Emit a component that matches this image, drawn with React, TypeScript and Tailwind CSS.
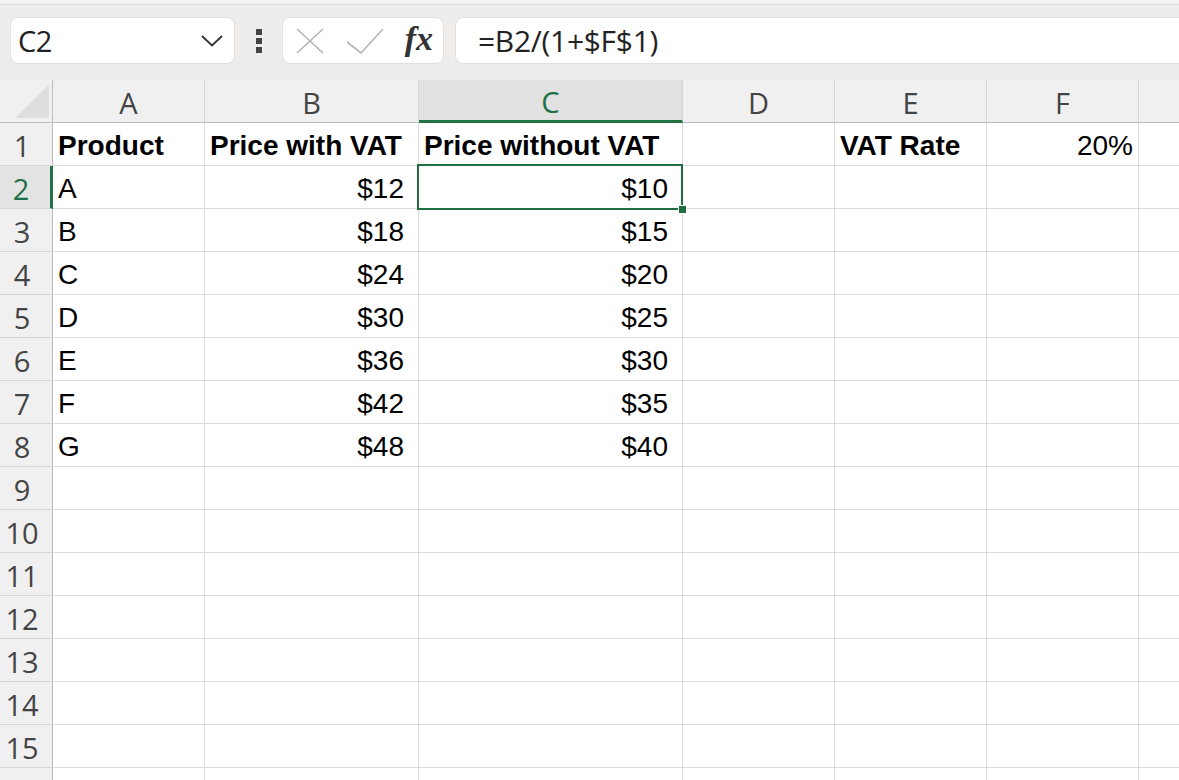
import React from 'react';

// Sheet layout: widths include each cell's 1px right border
const COLS = ['A', 'B', 'C', 'D', 'E', 'F', 'G'];
const GRID = 'grid shrink-0 grid-cols-[53px_152px_214px_264px_152px_152px_152px_152px]';

type Cell = { v?: string; bold?: boolean; align?: 'left' | 'right'; pr?: 'cur' | 'pct' };

const DATA: Record<number, Record<string, Cell>> = {
    1: {
        A: { v: 'Product', bold: true },
        B: { v: 'Price with VAT', bold: true },
        C: { v: 'Price without VAT', bold: true },
        E: { v: 'VAT Rate', bold: true },
        F: { v: '20%', align: 'right', pr: 'pct' },
    },
};

const PRODUCTS = [
    ['A', '$12', '$10'],
    ['B', '$18', '$15'],
    ['C', '$24', '$20'],
    ['D', '$30', '$25'],
    ['E', '$36', '$30'],
    ['F', '$42', '$35'],
    ['G', '$48', '$40'],
];

PRODUCTS.forEach(([p, withVat, withoutVat], i) => {
    DATA[i + 2] = {
        A: { v: p },
        B: { v: withVat, align: 'right', pr: 'cur' },
        C: { v: withoutVat, align: 'right', pr: 'cur' },
    };
});

const Chevron = () => (
    <svg width="24" height="14" viewBox="0 0 24 14" className="block">
        <polyline points="2,2 12,11.5 22,2" fill="none" stroke="#333" strokeWidth="1.8" />
    </svg>
);

const CrossIcon = () => (
    <svg width="28" height="26" viewBox="0 0 28 26" className="block">
        <line x1="1" y1="1" x2="27" y2="25" stroke="#b4b4b4" strokeWidth="1.6" />
        <line x1="27" y1="1" x2="1" y2="25" stroke="#b4b4b4" strokeWidth="1.6" />
    </svg>
);

const CheckIcon = () => (
    <svg width="38" height="28" viewBox="0 0 38 28" className="block">
        <polyline points="1,15 15,26 37,2" fill="none" stroke="#b4b4b4" strokeWidth="1.6" />
    </svg>
);

const DataCell = ({ row, col }: { row: number; col: string }) => {
    const cell = DATA[row]?.[col] || {};
    const selected = row === 2 && col === 'C';
    return (
        <div
            className={`relative h-[43px] border-r border-b border-[#dcdcdc] bg-white flex items-end pb-[3px] overflow-visible whitespace-nowrap
                ${cell.align === 'right' ? 'justify-end' : 'justify-start pl-[5px]'}
                ${cell.pr === 'cur' ? 'pr-[14px]' : ''} ${cell.pr === 'pct' ? 'pr-[5px]' : ''}`}
        >
            {cell.v && (
                <span className={`leading-[32px] text-[28px] text-black ${cell.bold ? 'font-bold' : ''}`}>
                    {cell.v}
                </span>
            )}
            {selected && (
                <div className="absolute -left-[2px] -top-[2px] -right-[1px] -bottom-[2px] border-2 border-[#1f6e43] z-10 pointer-events-none">
                    <div className="absolute -right-[6px] -bottom-[6px] w-[9px] h-[9px] bg-[#1f6e43] border border-white" />
                </div>
            )}
        </div>
    );
};

export default function App() {
    const rows = Array.from({ length: 15 }, (_, i) => i + 1);

    return (
        <div className="w-[1179px] h-[780px] overflow-hidden bg-white flex flex-col" style={{ fontFamily: '"Liberation Sans", Arial, sans-serif' }}>
            {/* Ribbon edge */}
            <div className="h-[5px] shrink-0 bg-[#f5f3f1] border-b border-[#dedad7] shadow-[0_1px_3px_rgba(0,0,0,0.12)]" />

            {/* Formula bar */}
            <div className="h-[75px] shrink-0 bg-[#efedeb] flex items-start pt-[12px] pl-[10px]" style={{ fontFamily: '"Open Sans", "Noto Sans", sans-serif' }}>
                <div className="w-[225px] h-[47px] shrink-0 bg-white rounded-lg border border-[#e2dfdc] flex items-center justify-between pl-[7px] pr-[10px]">
                    <span className="text-[29px] leading-none text-[#222] tracking-[-0.5px]">C2</span>
                    <Chevron />
                </div>
                <div className="w-[47px] h-[47px] shrink-0 flex flex-col items-center justify-center gap-[3px]">
                    <div className="w-[6px] h-[6px] bg-[#444]" />
                    <div className="w-[6px] h-[6px] bg-[#444]" />
                    <div className="w-[6px] h-[6px] bg-[#444]" />
                </div>
                <div className="w-[162px] h-[47px] shrink-0 bg-white rounded-lg border border-[#e2dfdc] flex items-center pl-[13px] pr-[10px]">
                    <CrossIcon />
                    <div className="ml-[22px]">
                        <CheckIcon />
                    </div>
                    <span
                        className="ml-auto text-[34px] leading-none italic font-bold text-[#333] -mt-[4px]"
                        style={{ fontFamily: '"Liberation Serif", "DejaVu Serif", serif' }}
                    >
                        fx
                    </span>
                </div>
                <div className="ml-[11px] flex-1 h-[47px] bg-white rounded-l-lg border border-r-0 border-[#e2dfdc] flex items-center pl-[22px]">
                    <span className="text-[30px] leading-none text-[#222] tracking-[-0.3px]">=B2/(1+$F$1)</span>
                </div>
            </div>

            {/* Column headers */}
            <div className={GRID} style={{ fontFamily: '"Open Sans", "Noto Sans", sans-serif' }}>
                <div className="relative h-[43px] bg-[#f0f0f0] border-r border-b border-[#bdbdbd]">
                    <svg width="53" height="42" viewBox="0 0 53 42" className="absolute inset-0">
                        <polygon points="49,5 49,38 15,38" fill="#dedede" />
                    </svg>
                </div>
                {COLS.map((c) => (
                    <div
                        key={c}
                        className={`h-[43px] border-r border-[#d6d6d6] flex items-center justify-center pt-[2px] text-[29px] leading-none
                            ${c === 'C'
                                ? 'bg-[#e1e1e1] text-[#1e7145] border-b-[3px] border-b-[#217346]'
                                : 'bg-[#f0f0f0] text-[#444] border-b border-b-[#bdbdbd]'}`}
                    >
                        {/* G sits past the window edge, its label is not visible */}
                        {c === 'G' ? '' : c}
                    </div>
                ))}
            </div>

            {/* Rows */}
            {rows.map((r) => (
                <div key={r} className={GRID}>
                    <div
                        className={`h-[43px] border-b border-[#d6d6d6] flex items-center justify-center pr-[8px] pt-[2px] text-[29px] leading-none
                            ${r === 2
                                ? 'bg-[#e3e3e3] text-[#1e7145] border-r-[3px] border-r-[#217346]'
                                : 'bg-[#f0f0f0] text-[#444] border-r border-r-[#bdbdbd]'}`}
                        style={{ fontFamily: '"Open Sans", "Noto Sans", sans-serif' }}
                    >
                        {r}
                    </div>
                    {COLS.map((c) => (
                        <DataCell key={c} row={r} col={c} />
                    ))}
                </div>
            ))}

            {/* Partially visible next row */}
            <div className="grid flex-1 grid-cols-[53px_152px_214px_264px_152px_152px_152px_152px]">
                <div className="bg-[#f0f0f0] border-r border-[#bdbdbd]" />
                {COLS.map((c) => (
                    <div key={c} className="bg-white border-r border-[#dcdcdc]" />
                ))}
            </div>
        </div>
    );
}
